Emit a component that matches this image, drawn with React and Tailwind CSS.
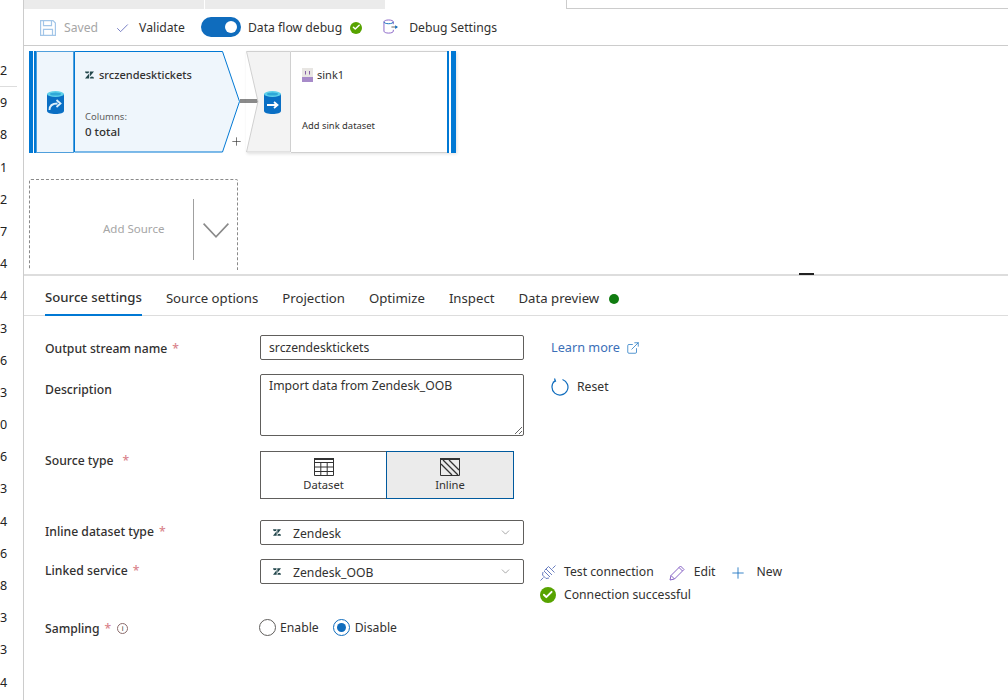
import { useState } from 'react'
import { ChevronDown, Plus, ExternalLink, Check } from 'lucide-react'

const gutterNumbers = ['2', '9', '8', '1', '2', '7', '4', '4', '3', '6', '3', '0', '6', '3', '4', '6', '8', '3', '3', '4']
const tabs = ['Source settings', 'Source options', 'Projection', 'Optimize', 'Inspect', 'Data preview']

function ZendeskIcon({ className }) {
  return (
    <svg viewBox="0 0 10 8" className={className}>
      <path d="M0 0h4.600a2.300 2.300 0 0 1-4.600 0z M4.600 2.200V8H0z M5.400 0H10L5.400 5.800z M5.400 8a2.300 2.300 0 0 1 4.600 0z" fill="#24484d" />
    </svg>
  )
}

function Cylinder({ arrow }) {
  return (
    <svg viewBox="0 0 17 23" className="w-[17px] h-[23px]">
      <path d="M0 3v17c0 1.700 3.800 3 8.500 3s8.500-1.300 8.500-3V3z" fill="#0a6fc4" />
      <ellipse cx="8.500" cy="3" rx="8.500" ry="3" fill="#5ed0ea" />
      <ellipse cx="8.500" cy="3" rx="5.500" ry="1.500" fill="#2fa8d8" />
      {arrow === 'curve' ? (
        <path d="M2.500 19c0-4.500 3-6.500 8-6.500M9.500 9l4 3.500-4 3.500" fill="none" stroke="#dff0fb" strokeWidth="1.800" />
      ) : (
        <path d="M3 14h10M10 11l3.500 3-3.500 3" fill="none" stroke="#fff" strokeWidth="1.800" />
      )}
    </svg>
  )
}

function GreenCheck({ className }) {
  return (
    <span className={`flex items-center justify-center rounded-full bg-[#57a300] text-white ${className}`}>
      <Check className="w-[72%] h-[72%]" strokeWidth={4} />
    </span>
  )
}

function FormRow({ label, mark, className, children, labelClass = 'pt-[5px]' }) {
  return (
    <div className={`flex items-start ${className}`}>
      <div className={`w-[215px] shrink-0 font-medium text-[#323130] ${labelClass}`}>
        {label}
        {mark}
      </div>
      {children}
    </div>
  )
}

const Req = ({ gap = 'ml-[5px]' }) => <span className={`${gap} text-[#d9838b]`}>*</span>

function SelectBox({ value }) {
  return (
    <div className="w-[264px] h-[25px] border border-[#605e5c] rounded-[2px] flex items-center pl-[12px] pr-[11px] text-[#323130]">
      <ZendeskIcon className="w-[8px] h-[7px] mr-[12px]" />
      <span className="flex-1 pt-[3px]">{value}</span>
      <ChevronDown className="w-[13px] h-[13px] text-[#7a7a7a]" strokeWidth={1.200} />
    </div>
  )
}

export default function App() {
  const [debug] = useState(true)
  return (
    <div className="w-[1008px] h-[700px] overflow-hidden flex bg-white text-[12.2px] text-[#323130] font-['Noto_Sans',sans-serif]">
      {/* line numbers cut off on the left */}
      <div className="w-[24px] shrink-0 border-r border-[#cccccc] pt-[55px] text-[12.5px] text-[#222]">
        {gutterNumbers.map((n, i) => (
          <div key={i} className={`h-[32.200px] leading-[32px] -ml-[3px] pl-[3px] ${i === 0 ? 'relative' : ''}`}>
            {n}
            {i === 0 && <div className="absolute left-0 bottom-0 w-[20px] h-px bg-[#ddd]" />}
          </div>
        ))}
      </div>

      <div className="flex-1 min-w-0 flex flex-col">
        {/* tab strip */}
        <div className="h-[9px] flex shrink-0">
          <div className="w-[180px] bg-[#ebebeb] mr-px" />
          <div className="w-[180px] bg-[#ebebeb]" />
          <div className="w-[181px] bg-white" />
          <div className="flex-1 border-l border-b border-[#cccccc]" />
        </div>

        {/* toolbar */}
        <div className="h-[37px] shrink-0 border-b border-[#cccccc] flex items-center pl-[16px] pt-[2px]">
          <svg viewBox="0 0 16 16" className="w-[16px] h-[16px]" fill="none" stroke="#a3c6e8" strokeWidth="1.200">
            <path d="M.6.600h12.400l2.400 2.400v12.400H.6z M3.500.6v5h8v-5 M3.500 15.400v-6h9v6" />
          </svg>
          <span className="ml-[8px] text-[#a6a6a6]">Saved</span>
          <Check className="ml-[17px] w-[15px] h-[15px] text-[#5a62b8]" strokeWidth={1.300} />
          <span className="ml-[9px]">Validate</span>
          <div className={`ml-[16px] -mt-[2px] w-[40px] h-[20px] rounded-full bg-[#0f6cbd] flex items-center ${debug ? 'justify-end' : ''} pr-[4px]`}>
            <div className="w-[12px] h-[12px] rounded-full bg-white" />
          </div>
          <span className="ml-[7px]">Data flow debug</span>
          <GreenCheck className="ml-[8px] -mt-px w-[12px] h-[12px]" />
          <svg viewBox="0 0 16 16" className="ml-[21px] -mt-[2px] w-[15px] h-[16px]" fill="none" stroke="#8661c5">
            <path d="M11 5V2.500C11 1.400 8.800.5 6 .5S1 1.400 1 2.500v10C1 13.600 3.200 14.500 6 14.500s5-.9 5-2V11" />
            <path d="M1 2.500c0 1.100 2.200 2 5 2s5-.9 5-2" stroke="#0f6cbd" />
            <path d="M9 8h5" stroke="#605e5c" />
            <path d="M13 6v4l3-2z" fill="#0f6cbd" stroke="none" />
          </svg>
          <span className="ml-[11px]">Debug Settings</span>
        </div>

        {/* canvas */}
        <div className="h-[224px] mb-[4px] shrink-0 overflow-hidden pl-[5px] pt-[5px] text-[11px]">
          <div className="flex h-[102px]">
            {/* source node */}
            <div className="relative w-[211px] h-[102px] shrink-0 flex">
              <svg viewBox="0 0 211 102" className="absolute inset-0 w-full h-full">
                <path d="M45.500.5H193.500L210.500 50.500L193.500 101H45.500z" fill="#eff6fc" stroke="#0078d4" />
              </svg>
              <div className="relative w-[4px] h-full bg-[#0078d4]" />
              <div className="relative w-px h-full bg-white" />
              <div className="relative w-[2px] h-full bg-[#0078d4]" />
              <div className="relative w-[38px] h-full bg-[#eff6fc] border border-[#4f9fdc] flex items-center justify-center">
                <Cylinder arrow="curve" />
              </div>
              <div className="relative flex-1 pl-[11px] pt-[16px] flex flex-col">
                <div className="flex items-center text-[#323130] font-medium">
                  <ZendeskIcon className="w-[9px] h-[8px] mr-[5px]" />
                  srczendesktickets
                </div>
                <div className="mt-[26px] text-[9.5px] leading-[14px] text-[#605e5c]">Columns:</div>
                <div className="text-[#323130] font-medium leading-[16px] text-[11.5px]">0 total</div>
              </div>
              <Plus className="absolute left-[201px] top-[84px] w-[13px] h-[13px] text-[#333]" strokeWidth={1.200} />
            </div>

            {/* connector */}
            <div className="relative w-[6px] shrink-0">
              <div className="absolute left-0 top-[48px] w-[20px] h-[4px] bg-[#8a8a8a]" />
            </div>

            {/* sink node */}
            <div className="relative w-[210px] h-[102px] shrink-0 flex shadow-[1px_1px_3px_rgba(0,0,0,0.12)]">
              <svg viewBox="0 0 45 102" className="w-[45px] h-[102px] shrink-0">
                <path d="M.5.500H44.500V101H.5L12 50.500z" fill="#f3f3f3" stroke="#d0d0d0" />
              </svg>
              <div className="absolute left-[18px] top-[40px]">
                <Cylinder arrow="right" />
              </div>
              <div className="flex-1 border-y border-[#d0d0d0] pl-[11px] pt-[15px] bg-white">
                <div className="flex items-center text-[#323130]">
                  <svg viewBox="0 0 11 14" className="w-[11px] h-[14px] mr-[4px]">
                    <rect width="11" height="9" fill="#e8e6e3" />
                    <rect y="9" width="11" height="5" fill="#a78bc9" />
                    <path d="M3.500 3v3.500M7.500 3v3.500" stroke="#8661a5" />
                  </svg>
                  sink1
                </div>
                <div className="mt-[35px] text-[9.4px] text-[#323130]">Add sink dataset</div>
              </div>
              <div className="w-[2px] h-full bg-[#0078d4]" />
              <div className="w-[2px] h-full bg-white" />
              <div className="w-[5px] h-full bg-[#0078d4]" />
            </div>
          </div>

          {/* add source */}
          <div className="mt-[26px] w-[209px] h-[100px] border border-dashed border-[#8a8a8a] rounded-[2px] flex items-start text-[11.5px] text-[#a6a6a6]">
            <div className="w-[163px] pt-[40px] pl-[73px]">Add Source</div>
            <div className="mt-[19px] w-px h-[61px] bg-[#a0a0a0]" />
            <svg viewBox="0 0 26 15" className="mt-[43px] ml-[9px] w-[26px] h-[15px]" fill="none" stroke="#8a8a8a" strokeWidth="1.600">
              <path d="M.6.600L13 13.800L25.400.6" />
            </svg>
          </div>
        </div>

        {/* panel splitter */}
        <div className="relative h-[2px] shrink-0 bg-[#dddddd]">
          <div className="absolute left-[775px] -top-px w-[15px] h-[2px] bg-[#222]" />
        </div>

        {/* tabs */}
        <div className="h-[40px] shrink-0 border-b border-[#dddddd] flex pl-[21px] gap-[24px] text-[13.2px]">
          {tabs.map((t, i) => (
            <div key={t} className={`h-[40px] flex items-center pt-[5px] ${i === 0 ? 'font-medium border-b-2 border-[#0078d4] text-[#323130]' : ''}`}>
              {t}
              {t === 'Data preview' && <span className="ml-[10px] w-[10px] h-[10px] rounded-full bg-[#107c10]" />}
            </div>
          ))}
        </div>

        {/* form */}
        <div className="pl-[21px] pt-[19px]">
          <FormRow label="Output stream name" mark={<Req />}>
            <div className="w-[264px] h-[25px] border border-[#605e5c] rounded-[2px] pl-[8px] leading-[23px]">srczendesktickets</div>
            <a className="ml-[27px] mt-[3px] flex items-center text-[12.7px] text-[#3b6fb8]">
              Learn more
              <ExternalLink className="ml-[6px] w-[14px] h-[14px] text-[#0f6cbd]" strokeWidth={1.200} />
            </a>
          </FormRow>

          <FormRow label="Description" className="mt-[14px]" labelClass="pt-[7px]">
            <textarea
              readOnly
              value="Import data from Zendesk_OOB"
              className="w-[264px] h-[62px] border border-[#605e5c] rounded-[2px] pl-[8px] pt-[2px] leading-[18px] outline-none"
            />
            <div className="ml-[27px] mt-[4px] flex items-center">
              <svg viewBox="0 0 18 18" className="w-[18px] h-[18px]" fill="none" stroke="#0f6cbd" strokeWidth="1.200">
                <path d="M11.500 1.500A8 8 0 1 1 4 2.800M3.500 .5L4.500 3.200L1.800 4.200" />
              </svg>
              <span className="ml-[8px]">Reset</span>
            </div>
          </FormRow>

          <FormRow label="Source type" mark={<Req gap="ml-[9px]" />} className="mt-[15px]" labelClass="pt-[1px]">
            <div className="w-[127px] h-[48px] border border-[#605e5c] flex flex-col items-center pt-[6px] text-[11.2px]">
              <svg viewBox="0 0 20 18" className="w-[20px] h-[18px]" fill="none" stroke="#333">
                <path d="M.5.500h19v17H.5z M.5 4.500h19 M.5 9h19 M.5 13.500h19 M6.800 4.500v13 M13.200 4.500v13" />
                <path d="M0 0h20v2H0z" fill="#333" stroke="none" />
              </svg>
              <span className="leading-[18px]">Dataset</span>
            </div>
            <div className="w-[128px] h-[48px] -ml-px border border-[#005a9e] bg-[#ebebeb] flex flex-col items-center pt-[6px] text-[11.2px]">
              <svg viewBox="0 0 20 18" className="w-[20px] h-[18px]" fill="none" stroke="#333">
                <path d="M.5.500h19v17H.5z" />
                <path d="M0 0h20v2H0z" fill="#333" stroke="none" />
                <path d="M3 2l15 15M9 2l10 10M1 6l11 11" strokeWidth="1.300" />
              </svg>
              <span className="leading-[18px]">Inline</span>
            </div>
          </FormRow>

          <FormRow label="Inline dataset type" mark={<Req />} className="mt-[21px]" labelClass="pt-[3px]">
            <SelectBox value="Zendesk" />
          </FormRow>

          <FormRow label="Linked service" mark={<Req />} className="mt-[14px]" labelClass="pt-[3px]">
            <SelectBox value="Zendesk_OOB" />
            <div className="ml-[16px] pt-px">
              <div className="flex items-center h-[25px]">
                <svg viewBox="0 0 16 16" className="w-[16px] h-[16px]" fill="none" stroke="#6b7fc0">
                  <path d="M.5 15.500l3-3M15.500.5l-3 3M6 4l6 6M4 6l6 6M4.500 5.500l4-4 6 6M5.500 4.500M3 7l-.5 3 3.500 3.500 3-.5" />
                </svg>
                <span className="ml-[8px]">Test connection</span>
                <svg viewBox="0 0 16 16" className="ml-[15px] w-[16px] h-[16px]" fill="none" stroke="#8661c5">
                  <path d="M1 15l1-4.500L11.500 1l3.500 3.500L5.500 14z M10 2.500L13.500 6 M2 10.500L5.500 14" />
                </svg>
                <span className="ml-[9px]">Edit</span>
                <Plus className="ml-[13px] w-[18px] h-[18px] text-[#0f6cbd]" strokeWidth={1.100} />
                <span className="ml-[10px]">New</span>
              </div>
              <div className="flex items-center mt-[1px]">
                <GreenCheck className="w-[16px] h-[16px]" />
                <span className="ml-[8px]">Connection successful</span>
              </div>
            </div>
          </FormRow>

          <FormRow
            label="Sampling"
            mark={
              <>
                <Req />
                <span className="relative -top-[2px] ml-[6px] inline-flex w-[11px] h-[11px] rounded-full border border-[#8a6b6b] text-[7px] leading-none items-center justify-center font-normal">i</span>
              </>
            }
            className="mt-[11px]"
            labelClass="pt-[5px]"
          >
            <div className="flex items-center h-[24px] -ml-[1px] pt-px">
              <span className="w-[17px] h-[17px] rounded-full border border-[#605e5c]" />
              <span className="ml-[4px]">Enable</span>
              <span className="ml-[14px] w-[17px] h-[17px] rounded-full border border-[#0f6cbd] flex items-center justify-center">
                <span className="w-[9px] h-[9px] rounded-full bg-[#0f6cbd]" />
              </span>
              <span className="ml-[5px]">Disable</span>
            </div>
          </FormRow>
        </div>
      </div>
    </div>
  )
}
